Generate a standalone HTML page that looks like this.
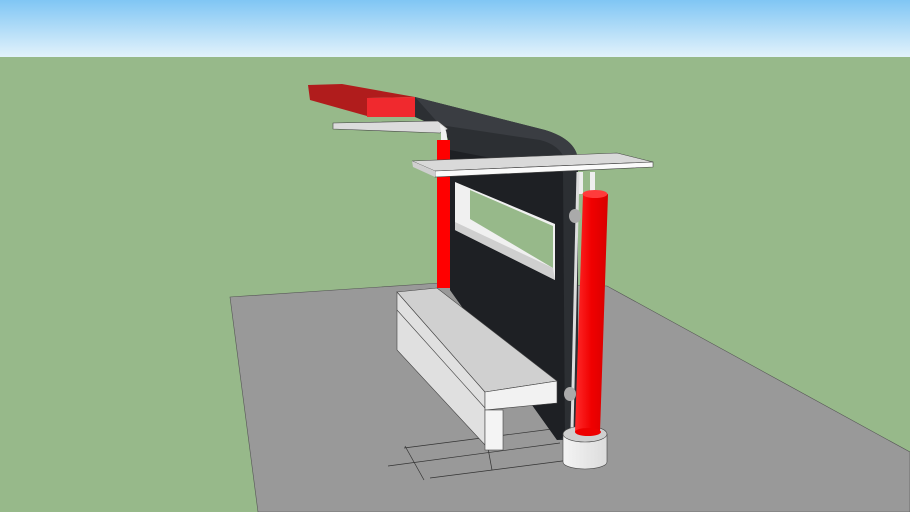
<!DOCTYPE html>
<html><head><style>
html,body{margin:0;padding:0;width:910px;height:512px;overflow:hidden;background:#97b98a}
</style></head><body>
<svg width="910" height="512" viewBox="0 0 910 512" xmlns="http://www.w3.org/2000/svg">
<defs>
<linearGradient id="sky" x1="0" y1="0" x2="0" y2="1"><stop offset="0" stop-color="#80c6f4"/><stop offset="1" stop-color="#e2f2fb"/></linearGradient>
<linearGradient id="pole" x1="0" y1="0" x2="1" y2="0"><stop offset="0" stop-color="#ff2a2a"/><stop offset="0.5" stop-color="#f00000"/><stop offset="1" stop-color="#d80000"/></linearGradient>
<linearGradient id="base" x1="0" y1="0" x2="1" y2="0"><stop offset="0" stop-color="#f4f4f4"/><stop offset="1" stop-color="#dcdcdc"/></linearGradient>
</defs>
<rect x="0" y="0" width="910" height="57" fill="url(#sky)"/>
<rect x="0" y="57" width="910" height="455" fill="#97b98a"/>
<!-- ground plane -->
<polygon points="230,297 440,283 607,286 910,452 910,512 258,512" fill="#999999" stroke="#555" stroke-width="0.6"/>
<!-- ground lines -->
<g stroke="#333" stroke-width="0.7" fill="none">
<line x1="388" y1="466" x2="560" y2="443"/>
<line x1="404" y1="448" x2="560" y2="428"/>
<line x1="405" y1="446" x2="424" y2="480"/>
<line x1="485" y1="432" x2="492" y2="470"/>
<line x1="430" y1="478" x2="570" y2="460"/>
</g>
<!-- dark wall/roof band -->
<path d="M415,97 L545,130 Q578,140 578,162 L578,440 L557,440 L450,290 L450,150 Q448,132 440,128 L415,117 Z" fill="#2c2f33"/>
<path d="M450,150 L563,172 L565,437 L557,440 L450,290 Z" fill="#1e2024"/>
<path d="M415,97 L545,130 Q578,140 578,162 L565,160 Q560,145 540,140 L440,125 Z" fill="#3a3d42"/>
<!-- window -->
<polygon points="455,182 555,224 555,280 455,230" fill="#f0f0f0"/>
<polygon points="470,190 553,226 553,268 470,219" fill="#97b98a"/>
<polygon points="455,222 553,268 555,280 455,230" fill="#cfcfcf"/>
<!-- red top box -->
<polygon points="308,85 342,84 415,97 367,98 367,116 310,100" fill="#b01c1c"/>
<polygon points="367,98 415,97 415,117 367,117" fill="#f0292e"/>
<!-- left shelf -->
<polygon points="333,123 438,121 448,129 440,133 333,129" fill="#dcdcdc" stroke="#444" stroke-width="0.6"/>
<path d="M440,125 Q447,127 447,138 L447,142 L441,142 L441,132 Z" fill="#f0f0f0"/>
<!-- left red pole -->
<rect x="437" y="140" width="13" height="148" fill="#f00"/>
<!-- big roof slab -->
<polygon points="412,161 617,153 653,162 435,171" fill="#d9d9d9" stroke="#444" stroke-width="0.6"/>
<polygon points="435,171 653,162 653,167 435,177" fill="#fafafa" stroke="#444" stroke-width="0.6"/>
<polygon points="412,161 435,171 435,177 413,167" fill="#cfcfcf"/>
<!-- white pipes -->
<rect x="579" y="172" width="4" height="22" fill="#eee"/>
<rect x="590" y="172" width="5" height="20" fill="#eee"/>
<path d="M578,172 L572,430" stroke="#ddd" stroke-width="3"/>
<!-- knobs -->
<ellipse cx="575" cy="216" rx="6" ry="7" fill="#aaa"/>
<ellipse cx="570" cy="394" rx="6" ry="7" fill="#aaa"/>
<!-- bench -->
<polygon points="397,292 485,392 485,445 397,350" fill="#e0e0e0" stroke="#444" stroke-width="0.6"/>
<line x1="397" y1="310" x2="485" y2="408" stroke="#444" stroke-width="0.6"/>
<polygon points="397,292 437,288 557,381 485,392" fill="#d0d0d0" stroke="#444" stroke-width="0.6"/>
<polygon points="485,392 557,381 557,403 485,410" fill="#f2f2f2" stroke="#444" stroke-width="0.6"/>
<rect x="485" y="410" width="18" height="40" fill="#f4f4f4" stroke="#444" stroke-width="0.6"/>
<!-- right base -->
<path d="M563,434 L563,462 A22,7 0 0 0 607,462 L607,434 Z" fill="url(#base)" stroke="#444" stroke-width="0.6"/>
<ellipse cx="585" cy="434" rx="22" ry="8" fill="#cfcfcf" stroke="#444" stroke-width="0.6"/>
<!-- right red pole -->
<path d="M583,194 L608,194 L600,432 L575,432 Z" fill="url(#pole)"/>
<ellipse cx="588" cy="432" rx="13" ry="4" fill="#e00"/>
<ellipse cx="595" cy="194" rx="12.5" ry="4" fill="#ff3b3b"/>
</svg>
</body></html>
